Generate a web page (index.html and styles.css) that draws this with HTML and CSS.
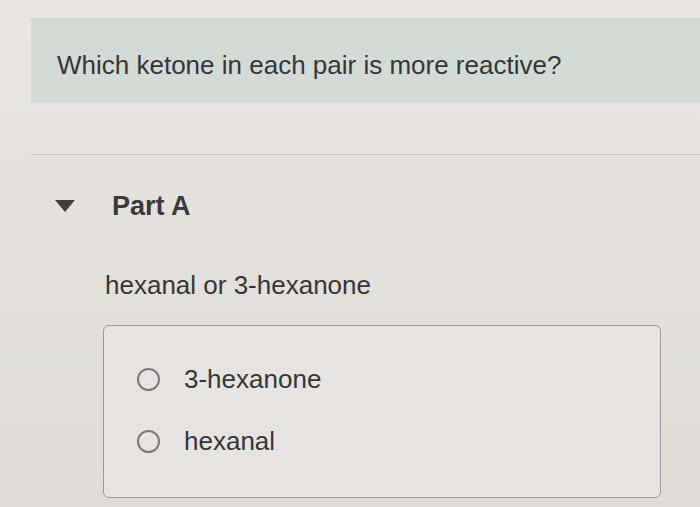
FILE: index.html
```html
<!doctype html>
<html lang="en">
<head>
  <title>Part A</title>
  <meta http-equiv="Content-Type" content="text/html; charset=UTF-8" />
  <meta name="viewport" content="width=device-width, initial-scale=1.0">
  <link rel="stylesheet" href="styles.css">
</head>
<body>
  <div class="page">
    <div class="prompt">Which ketone in each pair is more reactive?</div>

    <div class="part">
      <div class="part-head">
        <span class="caret"></span>
        <span class="part-title">Part A</span>
      </div>

      <div class="part-body">
        <div class="question">hexanal or 3-hexanone</div>

        <div class="choices">
          <label class="choice">
            <span class="radio"></span>
            <span>3-hexanone</span>
          </label>
          <label class="choice">
            <span class="radio"></span>
            <span>hexanal</span>
          </label>
        </div>
      </div>
    </div>
  </div>
</body>
</html>
```

FILE: styles.css
```css
:root {
  --font-family: "Liberation Sans", Arial, sans-serif;
  --text: #363636;
  --prompt-background: #d3dbd7;
  --rule: #c8c6c1;
  --box-border: #9b9a97;
}

* {
  box-sizing: border-box;
  font-family: var(--font-family);
}

body {
  margin: 0;
  min-height: 100vh;
  color: var(--text);
  background: linear-gradient(180deg, #e8e6e2 0%, #e3e1dc 45%, #dfdcd6 100%);
}

.page {
  padding: 18px 0 0 31px;
}

.prompt {
  height: 85px;
  display: flex;
  align-items: center;
  padding-left: 26px;
  padding-top: 10px;
  font-size: 26px;
  background-color: var(--prompt-background);
}

.part {
  margin-top: 51px;
  border-top: 1px solid var(--rule);
  padding-top: 35px;
}

.part-head {
  display: flex;
  align-items: center;
  height: 32px;
}

.caret {
  width: 0;
  height: 0;
  margin-left: 24px;
  margin-right: 37px;
  border-left: 10px solid transparent;
  border-right: 10px solid transparent;
  border-top: 12px solid #3f3f3f;
}

.part-title {
  font-size: 27px;
  font-weight: bold;
  color: #3a3a3a;
}

.part-body {
  margin-left: 72px;
  padding-top: 48px;
}

.question {
  font-size: 26px;
  line-height: 30px;
  padding-left: 2px;
}

.choices {
  margin-top: 25px;
  width: 558px;
  height: 173px;
  border: 1.5px solid var(--box-border);
  border-radius: 6px;
  background-color: #e6e4e0;
  padding: 38px 0 0 33px;
  display: flex;
  flex-direction: column;
  gap: 32px;
}

.choice {
  display: flex;
  align-items: center;
  height: 30px;
  font-size: 26px;
  gap: 24px;
}

.radio {
  width: 23px;
  height: 23px;
  border: 2px solid #7a7a7a;
  border-radius: 50%;
  flex-shrink: 0;
}
```
